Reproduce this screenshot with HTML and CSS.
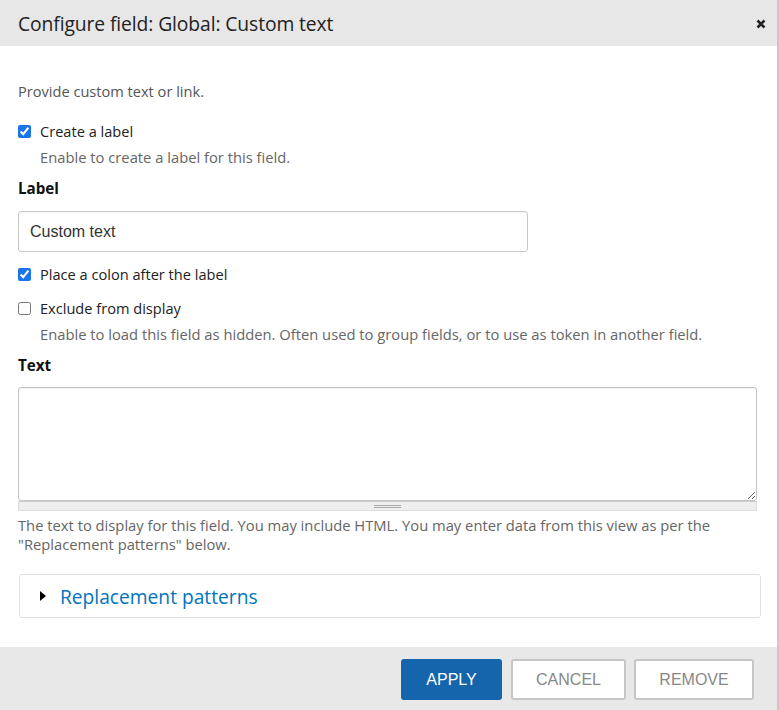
FILE: index.html
```html
<!DOCTYPE html>
<html>
<head>
<meta charset="utf-8">
<link rel="stylesheet" href="styles.css">
</head>
<body>
<div class="dialog">
  <div class="titlebar">
    <span class="title">Configure field: Global: Custom text</span>
    <svg class="close" width="10" height="10" viewBox="0 0 10 10"><path d="M1.5 1.5 L8.5 8.5 M8.5 1.5 L1.5 8.5" stroke="#222" stroke-width="2.6" stroke-linecap="butt"/></svg>
  </div>
  <div class="content">
    <p class="intro">Provide custom text or link.</p>
    <div class="check-item first">
      <label class="check"><input type="checkbox" checked> <span>Create a label</span></label>
      <div class="desc indent">Enable to create a label for this field.</div>
    </div>
    <div class="field">
      <div class="field-label">Label</div>
      <input class="text-input" type="text" value="Custom text">
    </div>
    <div class="check-item tight">
      <label class="check"><input type="checkbox" checked> <span>Place a colon after the label</span></label>
    </div>
    <div class="check-item">
      <label class="check"><input type="checkbox"> <span>Exclude from display</span></label>
      <div class="desc indent">Enable to load this field as hidden. Often used to group fields, or to use as token in another field.</div>
    </div>
    <div class="field text-field">
      <div class="field-label">Text</div>
      <div class="ta-wrap">
        <textarea class="ta"></textarea>
        <div class="grippie"><span></span></div>
      </div>
      <div class="desc ta-desc">The text to display for this field. You may include HTML. You may enter data from this view as per the "Replacement patterns" below.</div>
    </div>
    <div class="details">
      <svg class="tri" width="6" height="10" viewBox="0 0 6 10"><path d="M0 0 L6 5 L0 10 Z" fill="#000"/></svg>
      <span class="summary">Replacement patterns</span>
    </div>
  </div>
  <div class="footer">
    <button class="btn primary">APPLY</button>
    <button class="btn cancel">CANCEL</button>
    <button class="btn remove">REMOVE</button>
  </div>
</div>
</body>
</html>
```
FILE: styles.css
```css
html, body {
  margin: 0;
  padding: 0;
  background: #fff;
}
body {
  font-family: "Open Sans", "Liberation Sans", sans-serif;
  color: #222;
}
.dialog {
  width: 777px;
  height: 710px;
  border-right: 2px solid #c8c8c8;
  display: flex;
  flex-direction: column;
  background: #fff;
}
.titlebar {
  height: 46px;
  background: #e7e7e7;
  display: flex;
  align-items: center;
  justify-content: space-between;
  padding: 0 11px 0 18px;
  flex-shrink: 0;
}
.title {
  font-size: 19.3px;
  color: #222;
  letter-spacing: -0.1px;
}
.close {
  margin-top: 2px;
}
.content {
  flex: 1;
  padding: 0 16px 0 18px;
}
.intro {
  margin: 36px 0 0;
  font-size: 14.6px;
  color: #555;
  line-height: 19px;
}
.check-item {
  margin-top: 15px;
}
.check-item.first {
  margin-top: 21px;
}
.check-item.tight {
  margin-top: 13px;
}
.check {
  display: flex;
  align-items: center;
  font-size: 14.6px;
  color: #222;
  line-height: 19px;
}
.check input {
  width: 13px;
  height: 13px;
  margin: 0 9px 0 0;
  accent-color: #1a73e8;
}
.desc {
  font-size: 14.75px;
  color: #666;
  line-height: 19px;
}
.indent {
  margin: 7px 0 0 22px;
}
.field {
  margin-top: 12px;
}
.field.text-field {
  margin-top: 12px;
}
.field-label {
  font-weight: 700;
  font-size: 15.2px;
  color: #111;
  line-height: 19px;
}
.text-input {
  display: block;
  box-sizing: border-box;
  margin-top: 13px;
  width: 510px;
  height: 41px;
  border: 1px solid #c8c8c8;
  border-radius: 3px;
  padding: 0 11px;
  font-family: "Liberation Sans", Arial, sans-serif;
  font-size: 16px;
  color: #333;
  outline: none;
  box-shadow: inset 0 1px 1px rgba(0,0,0,0.05);
}
.ta-wrap {
  margin-top: 12px;
  width: 739px;
}
.ta {
  display: block;
  box-sizing: border-box;
  width: 739px;
  height: 114px;
  border: 1px solid #c4c4c4;
  border-radius: 3px;
  resize: vertical;
  margin: 0;
  font-family: "Liberation Sans", Arial, sans-serif;
  box-shadow: inset 0 1px 1px rgba(0,0,0,0.06);
}
.grippie {
  height: 10px;
  background: #eee;
  border: 1px solid #ddd;
  border-top-color: #ccc;
  box-sizing: border-box;
  display: flex;
  align-items: center;
  justify-content: center;
}
.grippie span {
  display: block;
  width: 27px;
  height: 3px;
  border-top: 1px solid #aaa;
  border-bottom: 1px solid #aaa;
  box-sizing: border-box;
}
.ta-desc {
  margin-top: 5px;
}
.details {
  margin-top: 20px;
  margin-left: 1px;
  width: 742px;
  height: 44px;
  box-sizing: border-box;
  border: 1px solid #e2e2e2;
  border-radius: 3px;
  display: flex;
  align-items: center;
  padding-left: 20px;
}
.tri {
  margin-right: 14px;
}
.summary {
  color: #0074bd;
  font-size: 19.2px;
}
.footer {
  height: 63px;
  background: #e8e8e8;
  display: flex;
  justify-content: flex-end;
  align-items: center;
  gap: 8px;
  padding: 0 23px 0 0;
  flex-shrink: 0;
}
.btn {
  height: 41px;
  box-sizing: border-box;
  border: 2px solid #c6c6c6;
  background: #fff;
  color: #888;
  border-radius: 3px;
  font-family: "Liberation Sans", Arial, sans-serif;
  font-size: 16px;
  padding: 0;
  margin-top: 2px;
  text-align: center;
}
.btn.primary {
  width: 101px;
  background: #1565ad;
  border-color: #1565ad;
  color: #fff;
  margin-right: 1px;
}
.btn.cancel {
  width: 115px;
}
.btn.remove {
  width: 120px;
}
```
